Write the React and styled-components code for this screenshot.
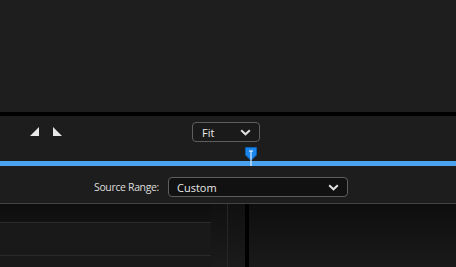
import React from "react";
import styled, { createGlobalStyle } from "styled-components";

const Global = createGlobalStyle`
  html, body { margin: 0; padding: 0; background: #1d1d1d; }
  body { font-family: "Open Sans", "Noto Sans", sans-serif; }
`;

const Page = styled.div`
  width: 456px;
  height: 267px;
  display: flex;
  flex-direction: column;
  overflow: hidden;
  background: #1d1d1d;
`;

const Monitor = styled.div`
  height: 112px;
  background: #1e1e1e;
  flex: none;
`;

const Rule = styled.div`
  height: ${(p) => p.$h}px;
  background: ${(p) => p.$c};
  flex: none;
`;

const Controls = styled.div`
  position: relative;
  height: 45px;
  flex: none;
  display: flex;
  align-items: flex-start;
  padding-top: 6px;
  box-sizing: border-box;
  background: #1d1d1d;
`;

const MarkGroup = styled.div`
  display: flex;
  gap: 14px;
  padding-left: 30px;
  padding-top: 5px;
  width: 192px;
  box-sizing: border-box;
`;

const Select = styled.div`
  height: 20px;
  width: ${(p) => p.$w}px;
  box-sizing: border-box;
  border: 1px solid #5e5e5e;
  border-radius: 4px;
  background: ${(p) => p.$bg || "#1b1b1b"};
  display: flex;
  align-items: center;
  justify-content: space-between;
  padding: 0 8px 0 ${(p) => p.$pl || 8}px;
  color: #e8e8e8;
  font-size: 11px;
  flex: none;
`;

const Timeline = styled.div`
  position: relative;
  height: 5px;
  flex: none;
  background: #4aa3ee;
`;

const Playhead = styled.div`
  position: absolute;
  left: 245px;
  top: -14px;
  width: 12px;
  height: 19px;
`;

const SourceBar = styled.div`
  height: 37px;
  flex: none;
  display: flex;
  align-items: flex-start;
  padding: 11px 0 0 94px;
  gap: 10px;
  box-sizing: border-box;
  background: #1d1d1d;
`;

const Label = styled.span`
  color: #dcdcdc;
  font-size: 10.5px;
  line-height: 20px;
  letter-spacing: -0.35px;
  width: 64px;
  white-space: nowrap;
`;

const Bottom = styled.div`
  flex: 1;
  display: grid;
  grid-template-columns: 211px 16px 1px 17px 4px 1fr;
`;

const List = styled.div`
  display: grid;
  grid-template-rows: 18px 1px 32px 1px 1fr;
  background: #191919;
`;

const ListHead = styled.div`
  background: linear-gradient(#0e0e0e, #121212);
`;

const ListLine = styled.div`
  background: #2a2a2a;
`;

const Col = styled.div`
  background: ${(p) => p.$bg};
`;

const Chevron = () => (
  <svg width="11" height="7" viewBox="0 0 11 7">
    <path d="M1.2 1.2 L5.5 5.3 L9.8 1.2" fill="none" stroke="#e0e0e0" strokeWidth="2" />
  </svg>
);

const TriLeft = () => (
  <svg width="9" height="9" viewBox="0 0 9 9">
    <path d="M0 9 L9 0 L9 9 Z" fill="#e8e8e8" />
  </svg>
);
const TriRight = () => (
  <svg width="9" height="9" viewBox="0 0 9 9">
    <path d="M0 0 L9 9 L0 9 Z" fill="#e8e8e8" />
  </svg>
);

export default function App() {
  return (
    <Page>
      <Global />
      <Monitor />
      <Rule $h={4} $c="#000" />
      <Controls>
        <MarkGroup>
          <TriLeft />
          <TriRight />
        </MarkGroup>
        <Select $w={68} $pl={9} $bg="#1a1a1a">
          <span>Fit</span>
          <Chevron />
        </Select>
      </Controls>
      <Timeline>
        <Playhead>
          <svg width="12" height="19" viewBox="0 0 12 19">
            <path d="M0.5 0.5 H11.5 V8 L6 13.5 L0.5 8 Z" fill="#1a86ec" stroke="#0d5fb0" strokeWidth="1" />
            <path d="M4 4 H8 M6 4 V9" stroke="#fff" strokeWidth="1" fill="none" />
            <rect x="5.5" y="9" width="1" height="10" fill="#ffffff" />
          </svg>
        </Playhead>
      </Timeline>
      <SourceBar>
        <Label>Source Range:</Label>
        <Select $w={180} $pl={8} $bg="#111111">
          <span>Custom</span>
          <Chevron />
        </Select>
      </SourceBar>
      <Rule $h={1} $c="#444" />
      <Bottom>
        <List>
          <ListHead />
          <ListLine />
          <div />
          <ListLine />
          <div />
        </List>
        <Col $bg="linear-gradient(#101010, #1b1b1b)" />
        <Col $bg="#262626" />
        <Col $bg="linear-gradient(#101010, #1b1b1b)" />
        <Col $bg="#000" />
        <Col $bg="linear-gradient(#0e0e0e, #1a1a1a)" />
      </Bottom>
    </Page>
  );
}
